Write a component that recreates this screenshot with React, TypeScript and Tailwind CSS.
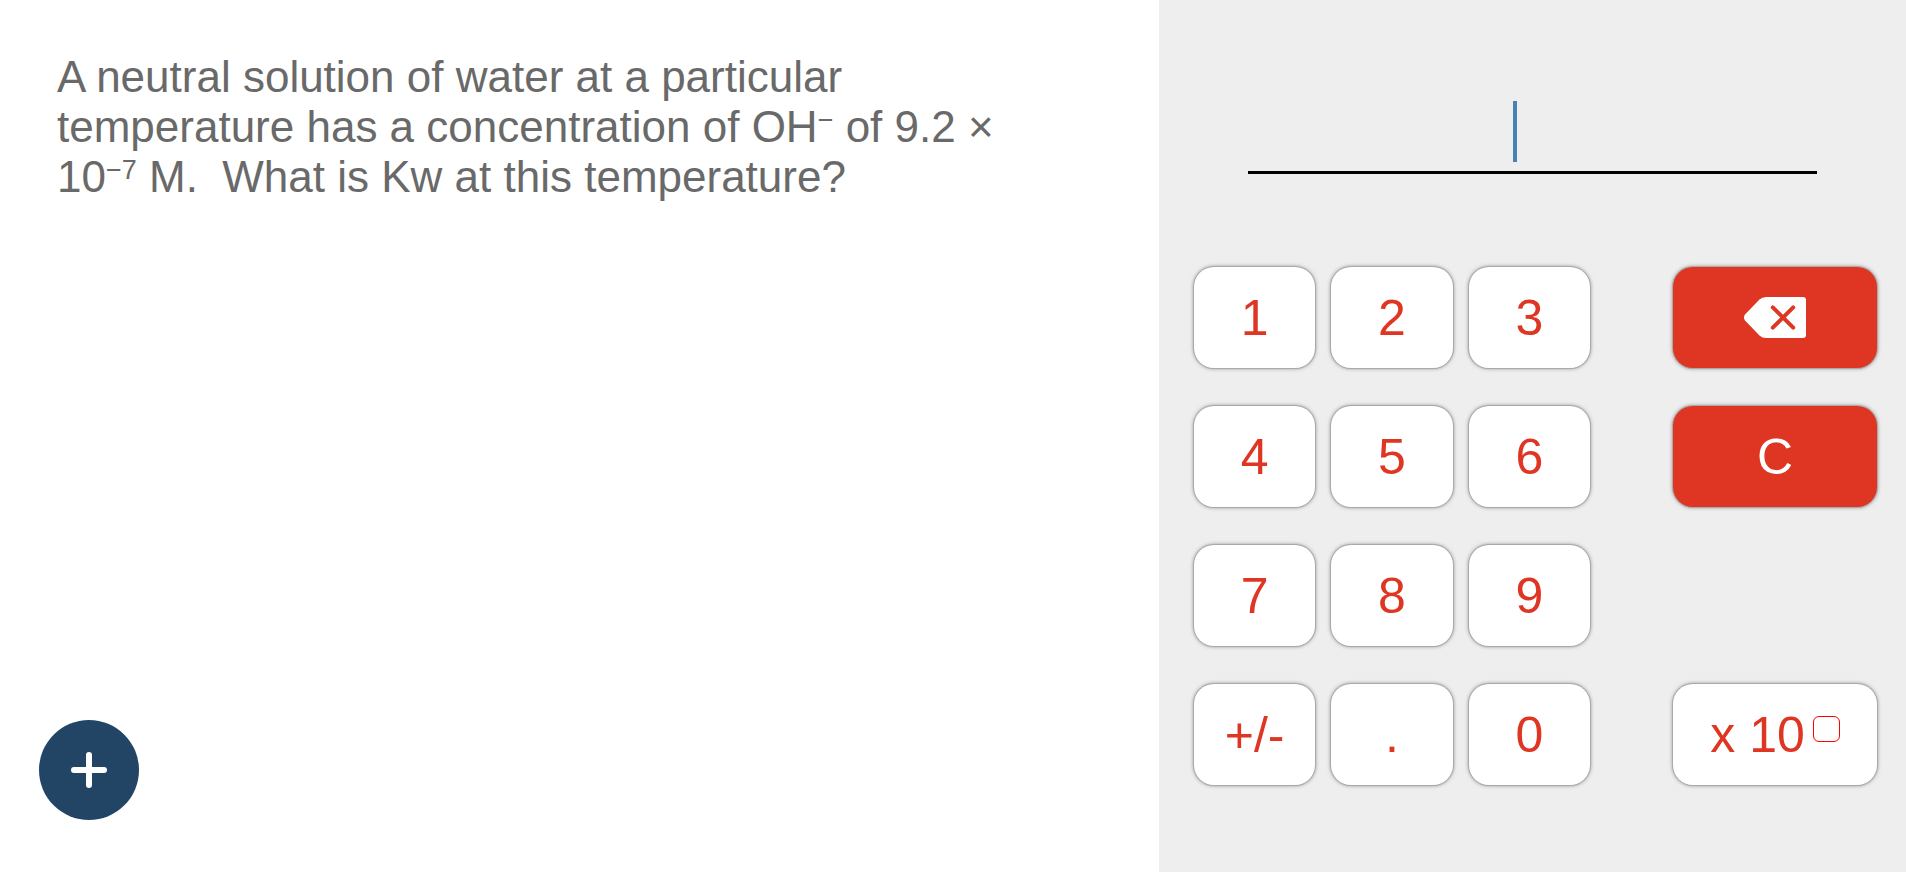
import { useState, type ReactNode } from 'react';

interface KeyProps {
  label: string;
  variant?: 'light' | 'red';
  onPress: () => void;
  children: ReactNode;
}

const DIGIT_KEYS = ['1', '2', '3', '4', '5', '6', '7', '8', '9', '+/-', '.', '0'];

function Key({ label, variant = 'light', onPress, children }: KeyProps) {
  return (
    <button
      type="button"
      aria-label={label}
      onClick={onPress}
      className={`flex h-[101px] w-full cursor-pointer items-center justify-center rounded-[20px] text-[50px] leading-none shadow-[0_0_0_1px_#aaaaaa,0_0_4px_#00000088] ${
        variant === 'red' ? 'bg-[#de3623] text-white' : 'bg-white text-[#de3623]'
      }`}
    >
      {children}
    </button>
  );
}

function BackspaceIcon() {
  return (
    <svg viewBox="0 0 62 41" className="h-[41px] w-[62px]" aria-hidden="true">
      <path
        d="M22 0H59Q62 0 62 3V38Q62 41 59 41H22Q18 41 15.500 38.500L1 23.500Q-1 20.500 1 17.500L15.500 2.500Q18 0 22 0Z"
        fill="currentColor"
      />
      <path d="M28.800 10.300L49.200 30.700M49.200 10.300L28.800 30.700" stroke="#de3623" strokeWidth="4" strokeLinecap="round" />
    </svg>
  );
}

export default function App() {
  const [value, setValue] = useState('');

  const handleKey = (key: string) => {
    if (key === '+/-') {
      setValue((v) => (v.startsWith('-') ? v.slice(1) : '-' + v));
      return;
    }
    // Only one decimal point allowed
    if (key === '.' && value.includes('.')) return;
    setValue((v) => v + key);
  };

  return (
    <div className="grid min-h-screen grid-cols-[1159fr_747fr] bg-white font-['Liberation_Sans',Arial,sans-serif]">
      {/* Question */}
      <main className="flex flex-col justify-between pt-[52px] pr-24 pb-[52px] pl-[39px]">
        <p className="pl-[18px] text-[44px] leading-[50px] text-[#696969]">
          A neutral solution of water at a particular temperature has a concentration of OH
          <sup className="text-[27px]">−</sup> of 9.2 × 10<sup className="text-[27px]">−7</sup> M.&nbsp; What is Kw at
          this temperature?
        </p>
        <button
          type="button"
          aria-label="Add"
          className="flex size-[100px] cursor-pointer items-center justify-center rounded-full bg-[#224566] text-white"
        >
          <svg viewBox="0 0 36 36" className="size-9" aria-hidden="true">
            <path d="M18 3V33M3 18H33" stroke="currentColor" strokeWidth="6" strokeLinecap="round" />
          </svg>
        </button>
      </main>

      {/* Answer pad */}
      <section className="bg-[#eeeeee] pt-[93px] pr-[29px] pb-[87px] pl-[35px]">
        <div className="relative mr-[60px] ml-[54px]">
          <input
            type="text"
            aria-label="Answer"
            value={value}
            onChange={(e) => setValue(e.target.value)}
            className="block h-[81px] w-full border-b-3 border-black bg-transparent text-center text-[50px] text-black caret-transparent outline-none"
          />
          {value === '' && (
            <span className="pointer-events-none absolute top-2 left-[calc(50%-20px)] h-[61px] w-1 bg-[#4682b4]" />
          )}
        </div>

        <div className="mt-[93px] grid grid-cols-[396fr_204fr] gap-x-[83px]">
          <div className="grid grid-cols-3 gap-x-4 gap-y-[38px]">
            {DIGIT_KEYS.map((key) => (
              <Key key={key} label={key} onPress={() => handleKey(key)}>
                {key}
              </Key>
            ))}
          </div>
          <div className="flex flex-col justify-between">
            <div className="flex flex-col gap-[38px]">
              <Key label="Backspace" variant="red" onPress={() => setValue((v) => v.slice(0, -1))}>
                <BackspaceIcon />
              </Key>
              <Key label="Clear" variant="red" onPress={() => setValue('')}>
                C
              </Key>
            </div>
            <Key label="x 10 to the power" onPress={() => setValue((v) => v + 'e')}>
              <span className="flex items-start gap-2">
                x 10
                <span className="mt-1.5 h-[26px] w-[27px] rounded-md border border-[#ff0000]" />
              </span>
            </Key>
          </div>
        </div>
      </section>
    </div>
  );
}
